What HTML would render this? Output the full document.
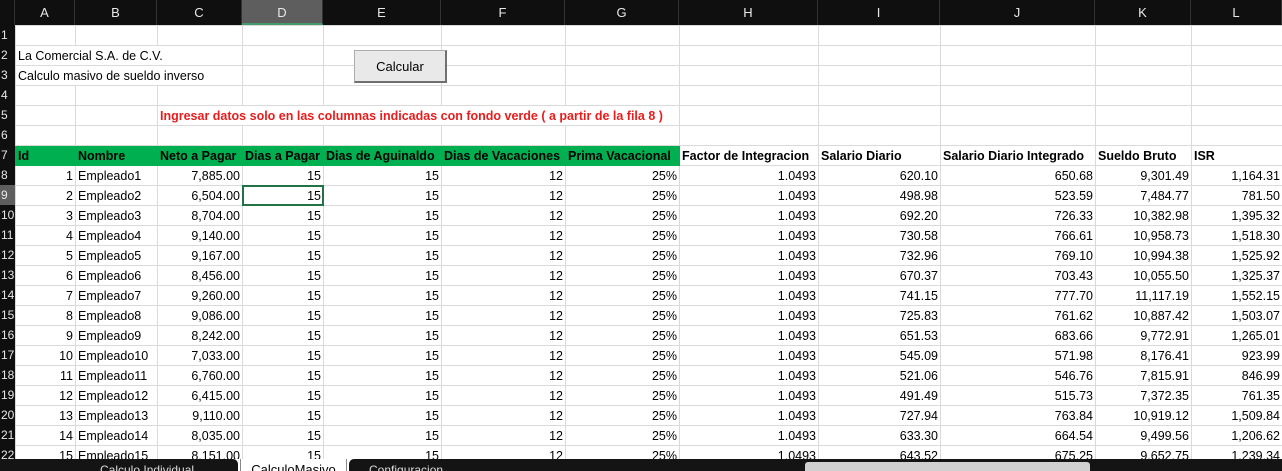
<!DOCTYPE html>
<html><head><meta charset="utf-8"><style>
*{margin:0;padding:0;box-sizing:border-box}
body{width:1282px;height:471px;overflow:hidden;background:#fff;font-family:"Liberation Sans",sans-serif;font-size:12.5px;position:relative}
.colh{position:absolute;top:0;left:0;width:1282px;height:25px;background:#0f0f0f}
.colh div{position:absolute;top:0;height:25px;line-height:25px;text-align:center;color:#e8e8e8;font-size:13px;border-right:1px solid #333}
.rowh{position:absolute;top:25px;left:0;width:15px;height:446px;background:#0f0f0f}
.rowh div{position:absolute;left:0;width:15px;height:20px;line-height:20px;color:#e8e8e8;font-size:12px;text-align:left;padding-left:1px}
table{position:absolute;top:25px;left:15px;width:1267px;border-collapse:collapse;table-layout:fixed}
td{height:20px;border:1px solid #dadada;padding:0 2px;white-space:nowrap;overflow:visible;color:#000;line-height:18px}
td.r{text-align:right}
tr.hd td{background:#00b050;font-weight:bold;border-color:#00b050;overflow:hidden}
tr.hd td.w{background:#fff;border-color:#dadada}
.btn{position:absolute;left:354px;top:50px;width:93px;height:33px;background:#e9e9e9;border:1px solid #adadad;border-right:2px solid #707070;border-bottom:2px solid #707070;text-align:center;line-height:31px;font-size:13px}
.sel{position:absolute;left:242px;top:185px;width:82px;height:21px;border:2px solid #217346}
.tabs{position:absolute;left:0;top:459px;width:1282px;height:12px;background:#fff}
</style></head><body>
<div class="colh">
<div style="left:0;width:15px"></div>
<div style="left:15px;width:60px">A</div>
<div style="left:75px;width:82px">B</div>
<div style="left:157px;width:85px">C</div>
<div style="left:242px;width:81px;background:#5e5e5e;border-bottom:2px solid #3f9b6a">D</div>
<div style="left:323px;width:118px">E</div>
<div style="left:441px;width:124px">F</div>
<div style="left:565px;width:114px">G</div>
<div style="left:679px;width:139px">H</div>
<div style="left:818px;width:122px">I</div>
<div style="left:940px;width:155px">J</div>
<div style="left:1095px;width:96px">K</div>
<div style="left:1191px;width:91px">L</div>
</div>
<div class="rowh">
<div style="top:0">1</div><div style="top:20px">2</div><div style="top:40px">3</div><div style="top:60px">4</div><div style="top:80px">5</div><div style="top:100px">6</div><div style="top:120px">7</div><div style="top:140px">8</div><div style="top:160px;background:#5e5e5e">9</div><div style="top:180px">10</div><div style="top:200px">11</div><div style="top:220px">12</div><div style="top:240px">13</div><div style="top:260px">14</div><div style="top:280px">15</div><div style="top:300px">16</div><div style="top:320px">17</div><div style="top:340px">18</div><div style="top:360px">19</div><div style="top:380px">20</div><div style="top:400px">21</div><div style="top:420px">22</div>
</div>
<table>
<colgroup><col style="width:60px"><col style="width:82px"><col style="width:85px"><col style="width:81px"><col style="width:118px"><col style="width:124px"><col style="width:114px"><col style="width:139px"><col style="width:122px"><col style="width:155px"><col style="width:96px"><col style="width:91px"></colgroup>
<tr><td></td><td></td><td></td><td></td><td></td><td></td><td></td><td></td><td></td><td></td><td></td><td></td></tr>
<tr><td style="border-right:none">La Comercial S.A. de C.V.</td><td style="border-left:none;border-right:none"></td><td style="border-left:none"></td><td></td><td></td><td></td><td></td><td></td><td></td><td></td><td></td><td></td></tr>
<tr><td style="border-right:none">Calculo masivo de sueldo inverso</td><td style="border-left:none;border-right:none"></td><td style="border-left:none"></td><td></td><td></td><td></td><td></td><td></td><td></td><td></td><td></td><td></td></tr>
<tr><td></td><td></td><td></td><td></td><td></td><td></td><td></td><td></td><td></td><td></td><td></td><td></td></tr>
<tr><td></td><td></td><td colspan="5" style="color:#e81c1c;font-weight:bold">Ingresar datos solo en las columnas indicadas con fondo verde ( a partir de la fila 8 )</td><td></td><td></td><td></td><td></td><td></td></tr>
<tr><td></td><td></td><td></td><td></td><td></td><td></td><td></td><td></td><td></td><td></td><td></td><td></td></tr>
<tr class="hd"><td>Id</td><td>Nombre</td><td>Neto a Pagar</td><td>Dias a Pagar</td><td>Dias de Aguinaldo</td><td>Dias de Vacaciones</td><td>Prima Vacacional</td><td class="w">Factor de Integracion</td><td class="w">Salario Diario</td><td class="w">Salario Diario Integrado</td><td class="w">Sueldo Bruto</td><td class="w">ISR</td></tr>
<tr><td class="r">1</td><td>Empleado1</td><td class="r">7,885.00</td><td class="r">15</td><td class="r">15</td><td class="r">12</td><td class="r">25%</td><td class="r">1.0493</td><td class="r">620.10</td><td class="r">650.68</td><td class="r">9,301.49</td><td class="r">1,164.31</td></tr>
<tr><td class="r">2</td><td>Empleado2</td><td class="r">6,504.00</td><td class="r">15</td><td class="r">15</td><td class="r">12</td><td class="r">25%</td><td class="r">1.0493</td><td class="r">498.98</td><td class="r">523.59</td><td class="r">7,484.77</td><td class="r">781.50</td></tr>
<tr><td class="r">3</td><td>Empleado3</td><td class="r">8,704.00</td><td class="r">15</td><td class="r">15</td><td class="r">12</td><td class="r">25%</td><td class="r">1.0493</td><td class="r">692.20</td><td class="r">726.33</td><td class="r">10,382.98</td><td class="r">1,395.32</td></tr>
<tr><td class="r">4</td><td>Empleado4</td><td class="r">9,140.00</td><td class="r">15</td><td class="r">15</td><td class="r">12</td><td class="r">25%</td><td class="r">1.0493</td><td class="r">730.58</td><td class="r">766.61</td><td class="r">10,958.73</td><td class="r">1,518.30</td></tr>
<tr><td class="r">5</td><td>Empleado5</td><td class="r">9,167.00</td><td class="r">15</td><td class="r">15</td><td class="r">12</td><td class="r">25%</td><td class="r">1.0493</td><td class="r">732.96</td><td class="r">769.10</td><td class="r">10,994.38</td><td class="r">1,525.92</td></tr>
<tr><td class="r">6</td><td>Empleado6</td><td class="r">8,456.00</td><td class="r">15</td><td class="r">15</td><td class="r">12</td><td class="r">25%</td><td class="r">1.0493</td><td class="r">670.37</td><td class="r">703.43</td><td class="r">10,055.50</td><td class="r">1,325.37</td></tr>
<tr><td class="r">7</td><td>Empleado7</td><td class="r">9,260.00</td><td class="r">15</td><td class="r">15</td><td class="r">12</td><td class="r">25%</td><td class="r">1.0493</td><td class="r">741.15</td><td class="r">777.70</td><td class="r">11,117.19</td><td class="r">1,552.15</td></tr>
<tr><td class="r">8</td><td>Empleado8</td><td class="r">9,086.00</td><td class="r">15</td><td class="r">15</td><td class="r">12</td><td class="r">25%</td><td class="r">1.0493</td><td class="r">725.83</td><td class="r">761.62</td><td class="r">10,887.42</td><td class="r">1,503.07</td></tr>
<tr><td class="r">9</td><td>Empleado9</td><td class="r">8,242.00</td><td class="r">15</td><td class="r">15</td><td class="r">12</td><td class="r">25%</td><td class="r">1.0493</td><td class="r">651.53</td><td class="r">683.66</td><td class="r">9,772.91</td><td class="r">1,265.01</td></tr>
<tr><td class="r">10</td><td>Empleado10</td><td class="r">7,033.00</td><td class="r">15</td><td class="r">15</td><td class="r">12</td><td class="r">25%</td><td class="r">1.0493</td><td class="r">545.09</td><td class="r">571.98</td><td class="r">8,176.41</td><td class="r">923.99</td></tr>
<tr><td class="r">11</td><td>Empleado11</td><td class="r">6,760.00</td><td class="r">15</td><td class="r">15</td><td class="r">12</td><td class="r">25%</td><td class="r">1.0493</td><td class="r">521.06</td><td class="r">546.76</td><td class="r">7,815.91</td><td class="r">846.99</td></tr>
<tr><td class="r">12</td><td>Empleado12</td><td class="r">6,415.00</td><td class="r">15</td><td class="r">15</td><td class="r">12</td><td class="r">25%</td><td class="r">1.0493</td><td class="r">491.49</td><td class="r">515.73</td><td class="r">7,372.35</td><td class="r">761.35</td></tr>
<tr><td class="r">13</td><td>Empleado13</td><td class="r">9,110.00</td><td class="r">15</td><td class="r">15</td><td class="r">12</td><td class="r">25%</td><td class="r">1.0493</td><td class="r">727.94</td><td class="r">763.84</td><td class="r">10,919.12</td><td class="r">1,509.84</td></tr>
<tr><td class="r">14</td><td>Empleado14</td><td class="r">8,035.00</td><td class="r">15</td><td class="r">15</td><td class="r">12</td><td class="r">25%</td><td class="r">1.0493</td><td class="r">633.30</td><td class="r">664.54</td><td class="r">9,499.56</td><td class="r">1,206.62</td></tr>
<tr><td class="r">15</td><td>Empleado15</td><td class="r">8,151.00</td><td class="r">15</td><td class="r">15</td><td class="r">12</td><td class="r">25%</td><td class="r">1.0493</td><td class="r">643.52</td><td class="r">675.25</td><td class="r">9,652.75</td><td class="r">1,239.34</td></tr>
</table>
<div class="btn">Calcular</div>
<div class="sel"></div>
<div class="tabs">
<div style="position:absolute;left:0;top:0;width:238px;height:12px;background:#141414;border-radius:0 5px 0 0;color:#ddd;font-size:12px;line-height:22px;padding-left:100px;overflow:hidden">Calculo Individual</div>
<div style="position:absolute;left:240px;top:0;width:107px;height:12px;background:#fff;border-left:1px solid #888;border-right:1px solid #888;font-size:13px;line-height:22px;text-align:center;overflow:hidden">CalculoMasivo</div>
<div style="position:absolute;left:349px;top:0;width:933px;height:12px;background:#141414;border-radius:5px 0 0 0;color:#ddd;font-size:12px;line-height:22px;padding-left:20px;overflow:hidden">Configuracion</div>
<div style="position:absolute;left:805px;top:3px;width:285px;height:9px;background:#d0d0d0;border-radius:3px 3px 0 0"></div>
</div>
</body></html>
